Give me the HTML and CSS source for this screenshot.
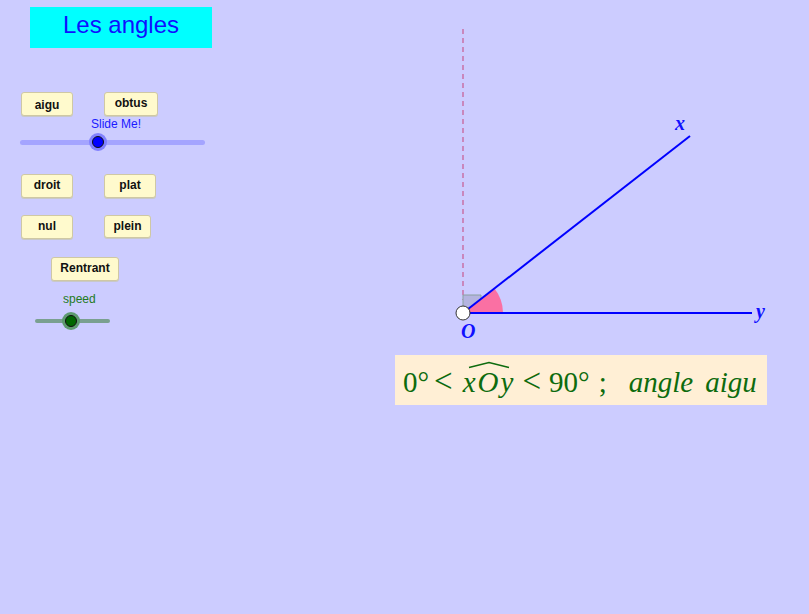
FILE: index.html
```html
<!DOCTYPE html>
<html>
<head>
<meta charset="utf-8">
<link rel="stylesheet" href="styles.css">
</head>
<body>
<div class="app">
  <div class="panel">
    <div class="title">Les angles</div>
    <div class="row row1">
      <button class="btn w-aigu">aigu</button>
      <button class="btn w-obtus">obtus</button>
    </div>
    <div class="slide-label">Slide Me!</div>
    <div class="slider main-slider"><div class="knob blue-knob"></div></div>
    <div class="row row2">
      <button class="btn w-droit">droit</button>
      <button class="btn w-plat">plat</button>
    </div>
    <div class="row row3">
      <button class="btn w-nul">nul</button>
      <button class="btn w-plein">plein</button>
    </div>
    <div class="row row4">
      <button class="btn w-rentrant">Rentrant</button>
    </div>
    <div class="speed-label">speed</div>
    <div class="slider speed-slider"><div class="knob green-knob"></div></div>
  </div>
  <div class="canvas">
    <svg class="diagram" width="419" height="355" viewBox="390 0 419 355">
      <line x1="463" y1="29" x2="463" y2="300" stroke="#c8649a" stroke-width="1.3" stroke-dasharray="5,4"/>
      <path d="M463 313 L503 313 A40 40 0 0 0 494.5 288.4 Z" fill="#ff6699" opacity="0.9"/>
      <path d="M463 313 L463 295 L481 295 L481 299 Z" fill="#b4b4e0" stroke="#8aa0a0" stroke-width="1"/>
      <line x1="463" y1="313" x2="752" y2="313" stroke="#0000ff" stroke-width="2"/>
      <line x1="463" y1="313" x2="690" y2="136" stroke="#0000ff" stroke-width="2"/>
      <circle cx="463" cy="313" r="7" fill="#ffffff" stroke="#333" stroke-width="1"/>
      <text x="461" y="338" class="lbl">O</text>
      <text x="675" y="130" class="lbl">x</text>
      <text x="756" y="318" class="lbl">y</text>
    </svg>
    <div class="formula">
      <span class="up">0°</span><span class="op op1">&lt;</span><span class="hat"><svg class="hat-mark" width="42" height="8" viewBox="0 0 42 8"><path d="M1 6.5 L21 1.5 L41 6.5" fill="none" stroke="#0d6b0d" stroke-width="1.4"/></svg><i>x</i><i>O</i><i>y</i></span><span class="op op2">&lt;</span><span class="up">90°</span><span class="semi">;</span><i class="word">angle</i><i class="word">aigu</i>
    </div>
  </div>
</div>
</body>
</html>
```
FILE: styles.css
```css
html, body {
  margin: 0;
  padding: 0;
  background: #ccccff;
  width: 809px;
  height: 614px;
  overflow: hidden;
  font-family: "Liberation Sans", Arial, sans-serif;
}
.app {
  display: flex;
  width: 809px;
  height: 614px;
}
.panel {
  width: 390px;
  display: flex;
  flex-direction: column;
  align-items: flex-start;
}
.title {
  margin: 7px 0 0 30px;
  width: 182px;
  height: 41px;
  background: #00ffff;
  color: #1010ff;
  font-size: 24px;
  text-align: center;
  line-height: 36px;
}
.row {
  display: flex;
  align-items: flex-start;
}
.row1 { margin: 44px 0 0 21px; gap: 31px; }
.row2 { margin: 0 0 0 21px; gap: 31px; }
.row3 { margin: 17px 0 0 21px; gap: 31px; }
.row4 { margin: 18px 0 0 51px; }
.btn {
  height: 24px;
  padding: 0;
  margin: 0;
  background: #fffacd;
  border: 1px solid #cfc8a4;
  border-radius: 3px;
  box-shadow: 0 1px 0 #c8c8c8;
  font-family: "Liberation Sans", Arial, sans-serif;
  font-weight: bold;
  font-size: 12px;
  color: #111;
  text-align: center;
}
.w-aigu { width: 52px; padding-top: 1px; }
.w-obtus { width: 54px; height: 24px; padding-bottom: 3px; }
.w-droit { width: 52px; padding-bottom: 3px; }
.w-plat { width: 52px; padding-bottom: 3px; }
.w-nul { width: 52px; padding-bottom: 2px; }
.w-plein { width: 47px; height: 23px; padding-bottom: 1px; }
.w-rentrant { width: 68px; padding-bottom: 2px; }
.slide-label {
  margin: 2px 0 0 91px;
  color: #1a1aff;
  font-size: 12px;
  line-height: 13px;
}
.slider {
  position: relative;
  border-radius: 3px;
}
.main-slider {
  margin: 9px 0 0 20px;
  width: 185px;
  height: 5px;
  background: #a4a4ff;
  margin-bottom: 29px;
}
.knob {
  position: absolute;
  border-radius: 50%;
  top: -4px;
}
.blue-knob {
  left: 72px;
  background: #0000ff;
  border: 1px solid #111;
  box-shadow: 0 0 0 3px #8080ff;
  width: 10px;
  height: 10px;
}
.speed-label {
  margin: 12px 0 0 63px;
  color: #237a23;
  font-size: 12px;
  line-height: 13px;
}
.speed-slider {
  margin: 13px 0 0 35px;
  width: 75px;
  height: 4px;
  background: #7aa090;
}
.green-knob {
  left: 30px;
  top: -4.5px;
  background: #006600;
  border: 1px solid #111;
  box-shadow: 0 0 0 3px #5e9a70;
  width: 10px;
  height: 10px;
}
.canvas {
  width: 419px;
  display: flex;
  flex-direction: column;
}
.diagram {
  display: block;
}
.lbl {
  font-family: "Liberation Serif", "Times New Roman", serif;
  font-style: italic;
  font-weight: bold;
  font-size: 20px;
  fill: #1010ff;
}
.formula {
  margin-left: 5px;
  width: 372px;
  height: 50px;
  background: #ffefd5;
  color: #0d6b0d;
  font-family: "Liberation Serif", "Times New Roman", serif;
  font-size: 29px;
  line-height: 53px;
  white-space: nowrap;
  padding-left: 8px;
  box-sizing: border-box;
}
.formula .op { font-size: 33px; }
.formula .op1 { margin: 0 10px 0 5px; }
.formula .op2 { margin: 0 8px 0 7px; }
.formula .semi { margin: 0 22px 0 9px; }
.formula .word { margin-right: 12px; }
.hat {
  position: relative;
  display: inline-block;
  line-height: 30px;
  letter-spacing: 2px;
}
.hat-mark {
  position: absolute;
  left: 5px;
  top: -6px;
}
```
